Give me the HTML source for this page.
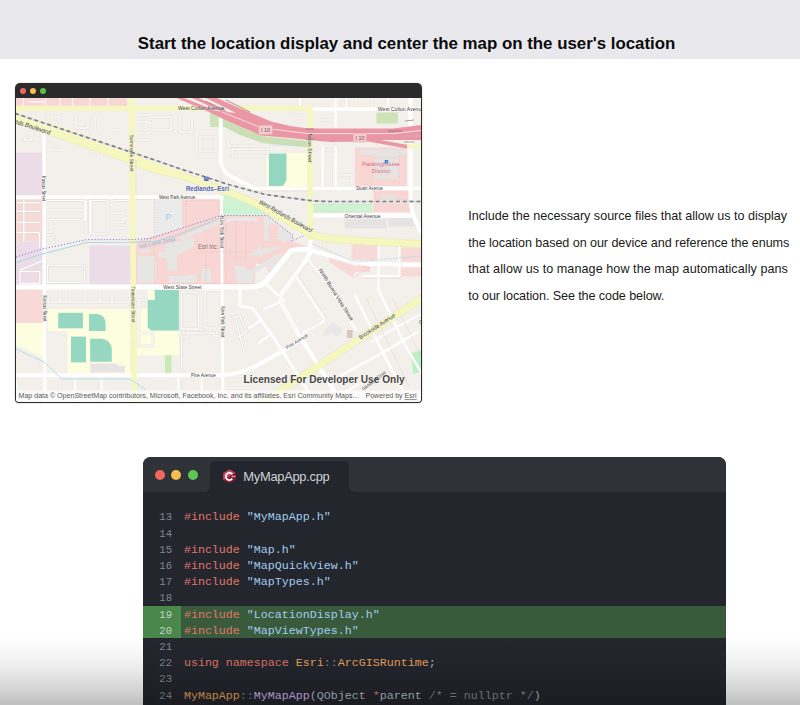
<!DOCTYPE html>
<html lang="en">
<head>
<meta charset="utf-8">
<title>Start the location display</title>
<style>
*{box-sizing:border-box;margin:0;padding:0}
html,body{width:800px;height:705px;overflow:hidden;background:#fff}
body{position:relative;font-family:"Liberation Sans",sans-serif;color:#151515}
.band{position:absolute;left:0;top:0;width:800px;height:59px;background:#e9e9ed}
.title{position:absolute;left:6.6px;top:34.2px;width:800px;text-align:center;font-weight:bold;font-size:16.85px;line-height:20px;color:#0b0b0b;white-space:nowrap}
.title span{display:inline-block}
.desc{position:absolute;left:468.3px;top:202.8px;font-size:12.6px;line-height:26.7px;color:#1a1a1a;white-space:nowrap}
.desc span{display:block}
/* map window */
.mapwin{position:absolute;left:15px;top:83px;width:407px;height:320px;background:#2b2b2b;border-radius:5px 5px 4px 4px;overflow:hidden;box-shadow:0 0 2px rgba(0,0,0,.25)}
.mapwin .dot{position:absolute;top:5px;width:6px;height:6px;border-radius:50%}
.mapwin svg{position:absolute;left:1px;top:15px;width:405px;height:304px;border-radius:0 0 3px 3px}
/* code window */
.code{position:absolute;left:143px;top:456.8px;width:582.5px;height:260px;background:#23262d;border-radius:8px 8px 0 0;overflow:hidden}
.code .bar{position:absolute;left:0;top:0;width:100%;height:35px;background:#2f3338}
.code .tab{position:absolute;left:67px;top:4px;width:139px;height:31px;background:#23262d;border-radius:5px 5px 0 0}
.code .cn{position:absolute;top:29px;width:6px;height:6px;background:#23262d}
.code .cn i{display:block;width:6px;height:6px;background:#2f3338}
.code .tl{position:absolute;top:13px;width:10px;height:10px;border-radius:50%}
.code .fname{position:absolute;left:100.3px;top:12.2px;font-size:12.9px;letter-spacing:-.28px;line-height:15px;color:#cfd2d6;white-space:nowrap}
.code .hl{position:absolute;left:0;top:149.3px;width:100%;height:32.4px;background:#3a5a3c}
.code .hlg{position:absolute;left:0;top:149.3px;width:37.5px;height:32.4px;background:#4a874b}
.code pre{position:absolute;left:0;top:52.6px;font-family:"Liberation Mono",monospace;font-size:11.67px;line-height:16.2px;color:#adbac7;white-space:pre}
.code pre .n{display:inline-block;width:29px;text-align:right;margin-right:11.9px;color:#7f8792;font-size:10.6px}
.k{color:#e07768}.s{color:#a2cdef}.c{color:#e9a35c}.f{color:#d3b8f5}.g{color:#7f8994}.p{color:#b4bfcb}
.fade{position:absolute;left:0;top:636px;width:800px;height:69px;background:linear-gradient(to bottom,rgba(0,0,0,0) 0%,rgba(0,0,0,.02) 17%,rgba(0,0,0,.048) 33%,rgba(0,0,0,.088) 50%,rgba(0,0,0,.135) 66%,rgba(0,0,0,.188) 83%,rgba(0,0,0,.25) 100%)}
</style>
</head>
<body>
<div class="band"></div>
<div class="title"><span>Start the location display and center the map on the user's location</span></div>

<div class="mapwin">
  <i class="dot" style="left:5px;background:#ee6a5e"></i>
  <i class="dot" style="left:15px;background:#f5bd4f"></i>
  <i class="dot" style="left:25px;background:#58c242"></i>
  <svg viewBox="16 98 405 304" font-family="Liberation Sans, sans-serif">
    <rect x="16" y="98" width="405" height="304" fill="#f3efea"/>
    <!--MAP-->
<defs>
  <clipPath id="mc"><rect x="16" y="98" width="405" height="304"/></clipPath>
</defs>
<g clip-path="url(#mc)">
<!-- land-use areas -->
<g>
  <!-- pink strip top-left (north of Colton) -->
  <rect x="16" y="98" width="111" height="8" fill="#f7d6d4"/>
  <path d="M23.5 98V106M45.5 98V106M60 98V106M72.5 98V106M90 98V106M108 98V106M28 102H44" stroke="#fcf5f3" stroke-width="1.3" fill="none"/>
  <!-- lavender left -->
  <rect x="16" y="152.5" width="26.5" height="43" fill="#ecdde8"/>
  <!-- pink left block below West Park -->
  <rect x="16" y="199.5" width="26.5" height="42" fill="#f7d9d7"/>
  <!-- lavender left bottom -->
  <path d="M16 241.5H42.5V285H16Z" fill="#ecdde8"/>
  <rect x="89.5" y="245.5" width="41" height="39.5" fill="#ecdde8"/>
  <!-- pink left below State -->
  <rect x="16" y="289.5" width="27" height="33.5" fill="#f7d9d7"/>
  <!-- light yellow left strip -->
  <path d="M16 323H43V358L16 345Z" fill="#fdfde0"/>
  <!-- school light yellow -->
  <path d="M47.5 309H131.5V373H67.5V331H47.5Z" fill="#fdfde0"/>
  <path d="M147 290.6H154.8V300H147.7V308.4H137V355.2H178.9V330.4H151V308Z" fill="#fdfde0"/>
  <!-- teal pitches -->
  <rect x="58.2" y="312.8" width="24.7" height="15.5" fill="#95d7c0"/>
  <path d="M89 314H97Q105.6 315 105.6 324V331H89Z" fill="#95d7c0"/>
  <rect x="71" y="336.6" width="15" height="25.8" fill="#95d7c0"/>
  <path d="M90.2 338.8H102Q111.8 340.5 111.8 350V361.8H90.2Z" fill="#95d7c0"/>
  <path d="M154.8 290H178.9V330.4H151.2L147.7 327.5V299.9H154.8Z" fill="#95d7c0"/>
  <rect x="165.1" y="355.2" width="6.4" height="17.7" fill="#c9ebb5"/>
  <!-- teal + yellow near Texas St -->
  <rect x="266.5" y="153" width="41" height="33.5" fill="#fdfde0"/>
  <path d="M269 153.6H286.5V180L283 186H269Z" fill="#95d7c0"/>
  <!-- Esri campus pink -->
  <path d="M135.7 241.8L181.8 227.2V199.2H220V215.5H267.5L293 235.4L291.6 241L308 247L291.6 248.2L271.7 275.1L264.6 284.3H135.7Z" fill="#f7d6d4"/>
  <path d="M256.1 263.75L264 264.5L270.3 273.7L266 280.8L254.7 284.3Z" fill="#f3efea"/>
  <!-- parking gray -->
  <path d="M154.8 199.2H181.8V227.2L154.8 235.4Z" fill="#ebebeb"/>
  <!-- Esri buildings -->
  <g fill="#e7e6e5">
  <path d="M137.8 256H155.5V282.2H137.8Z"/>
  <path d="M138.5 249.5H151V252H138.5Z"/>
  <path d="M164.75 244.6L194.5 237.5V246.7L176.8 255.25V270.85H167.6V263.75L164.75 258Z"/>
  <path d="M158.5 251.5H164.75V258H158.5Z"/>
  <path d="M179 237.5L218 220.5L220.8 223.3L181.8 240.35Z"/>
  <path d="M169 276H188V274.5H196.7V282.2H169Z"/>
  <path d="M200.9 268.7H210.85V282.2H200.9Z"/>
  <path d="M264 216.2H267.5L292.3 235.4L291.6 241L283 242.5L278.8 239H269V241H264Z"/>
  <path d="M225.6 217.7H256L258 220.5L256 223L253 220.5H232L225.6 224Z" fill="#eceae9"/>
  <path d="M250.5 251L258 250V244H260V249.6L278.8 246L279.5 248.2L262 256L251 255Z"/>
  <path d="M245.5 273.7L280.2 252.4L282.4 254.5L248.3 277.2Z"/>
  <path d="M233.4 265.2L245.5 267.3L253.3 275.1L254 282.9H236.3L236 272Z"/>
  <path d="M264 263.75L280.2 253.8L283 256.7L270.3 272.3Z"/>
  </g>
  <path d="M268.2 224.75H278.1V238.2H268.2Z" fill="#f7d6d4"/>
  <!-- park green -->
  <path d="M222.8 194.25L256.1 204.2L267.5 214.8H222.8Z" fill="#cdf3d3"/>
  <!-- Packinghouse -->
  <path d="M355 147.5H406.6V186H355Z" fill="#f7d6d4"/>
  <path d="M374 190.5H410V212H374Z" fill="#f7d6d4"/>
  <path d="M360 149.5H406V155.5H399V179H375V155.5H360Z" fill="#e6e4e3"/>
  <!-- green strip Oriental -->
  <rect x="313" y="203.8" width="59.5" height="8.5" fill="#cdf3d3"/>
  <!-- gray buildings oriental -->
  <rect x="344.5" y="218.8" width="42" height="9.5" fill="#e6e4e3"/>
  <rect x="388.5" y="218" width="27" height="8.5" fill="#e6e4e3"/>
  <rect x="382" y="195" width="14" height="7" fill="#e6e4e3"/>
  <!-- pinks south of blvd -->
  <rect x="352.5" y="244" width="25" height="16" fill="#f7d9d7"/>
  <rect x="401.5" y="247.5" width="20" height="14" fill="#f7d9d7"/>
  <rect x="401.5" y="267.5" width="20" height="9" fill="#f7d9d7"/>
  <path d="M329 258L370 267V272L355 272L352 277L329 262Z" fill="#f7d9d7"/>
  <!-- green top right -->
  <rect x="376.4" y="112.5" width="21.5" height="11" fill="#cfe3ba"/>
  <!-- freeway green verge -->
  <path d="M210 113H219V127H210Z" fill="#cfe3ba"/>
  <path d="M222 119L262 136L308 141V147.5L262 143L240 135L222 126Z" fill="#cbdfb7"/>
  <!-- small greens bottom right -->
  <path d="M411 353L421 350V372L413 374Z" fill="#bdf0c6"/>
  <!-- gray building school -->
  <path d="M90.2 363.5H116L118 366H125V372.4H90.2Z" fill="#e6e4e3"/>
  <path d="M323 332L333 322L343 329L338 337L331 333L325 337Z" fill="#e9e8e8"/>
  <rect x="347" y="330" width="5.5" height="8" fill="#d9c5bf"/>
</g>
<!-- thin service roads -->
<g fill="none" stroke="#d3cec8" stroke-width="2.4" opacity=".8">
  <path d="M24 132V140H32V132M48 112V118M52 117H60V126M76 117V128H88V117M95 117V131M112 130H120M98 158V152H90M60 150H50"/>
  <path d="M47 200.5H83Q84.5 200.5 84.5 202V219.8H47M47 210H84.5M86 200V234M89.4 200V234M91 200.5H106.5Q107.9 200.5 107.9 202V232.5Q107.9 234 106.5 234H92.4Q91 234 91 232.5ZM113 200.5H128M113 213H124V222H113M113 228H126M47 222H51V232H47M46.5 235H53Q54.5 235 54.5 237V241Q54.5 242.5 53 242.5H46.5M47.5 265.2H82.5Q84.5 265.2 84.5 267V280.5Q84.5 282.2 82.5 282.2H47.5Z"/>
  <path d="M17 202.8H40M17 211.3H40M17 222.6H40M17 232.5H40M23.8 200V241M39.5 232.5V248M19.9 271.5H39.8V283.6H19.9ZM20 270L42 261"/>
  <path d="M48 292V302H128M60 292V302M70 292V302M85 292V302M100 292V302M112 292V302"/>
  <path d="M153 117H171V130H153M180 116V132H192V120M200 137H216V151H200ZM197 132V158M228 140V146H254M232 149H268V156H232Z"/>
  <path d="M140 115H150M140 122H150V133H140M140 140H150"/>
  <path d="M290 112H300M318 120H333M352 100V108M372 100V106M322 150H334M322 160H334V185M338 175H352V185"/>
  <path d="M137 300H146M139 300V346H153V333H139M181.5 292H197Q198.8 292 198.8 294V329H181.5ZM205 290.5H221V328H205ZM181.5 333H188V337H181.5V372M188 333H214V336H221M230 318L240 316L247 332L237 338M236 320L244 352"/>
  <path d="M48 380V398M60 380V398M100 380V398M120 380V398M160 380V398M180 380V398M200 380V398M140 380V398"/>
  <path d="M228 380H245M228 388H250"/>
</g>
<g fill="none" stroke="#fefdfc" stroke-width="1.5">
  <path d="M24 132V140H32V132M48 112V118M52 117H60V126M76 117V128H88V117M95 117V131M112 130H120M98 158V152H90M60 150H50"/>
  <path d="M47 200.5H83Q84.5 200.5 84.5 202V219.8H47M47 210H84.5M86 200V234M89.4 200V234M91 200.5H106.5Q107.9 200.5 107.9 202V232.5Q107.9 234 106.5 234H92.4Q91 234 91 232.5ZM113 200.5H128M113 213H124V222H113M113 228H126M47 222H51V232H47M46.5 235H53Q54.5 235 54.5 237V241Q54.5 242.5 53 242.5H46.5M47.5 265.2H82.5Q84.5 265.2 84.5 267V280.5Q84.5 282.2 82.5 282.2H47.5Z"/>
  <path d="M17 202.8H40M17 211.3H40M17 222.6H40M17 232.5H40M23.8 200V241M39.5 232.5V248M19.9 271.5H39.8V283.6H19.9ZM20 270L42 261"/>
  <path d="M48 292V302H128M60 292V302M70 292V302M85 292V302M100 292V302M112 292V302"/>
  <path d="M153 117H171V130H153M180 116V132H192V120M200 137H216V151H200ZM197 132V158M228 140V146H254M232 149H268V156H232Z"/>
  <path d="M140 115H150M140 122H150V133H140M140 140H150"/>
  <path d="M290 112H300M318 120H333M352 100V108M372 100V106M322 150H334M322 160H334V185M338 175H352V185"/>
  <path d="M137 300H146M139 300V346H153V333H139M181.5 292H197Q198.8 292 198.8 294V329H181.5ZM205 290.5H221V328H205ZM181.5 333H188V337H181.5V372M188 333H214V336H221M230 318L240 316L247 332L237 338M236 320L244 352"/>
  <path d="M48 380V398M60 380V398M100 380V398M120 380V398M160 380V398M180 380V398M200 380V398M140 380V398"/>
  <path d="M228 380H245M228 388H250"/>
</g>
<!-- white roads -->
<g fill="none" stroke="#ffffff" stroke-linecap="round" stroke-linejoin="round">
  <path d="M16 197H222" stroke-width="3.6"/>
  <path d="M44 132L44.2 285L45 402" stroke-width="3.2"/>
  <path d="M16 287H252Q262 286 266 281.5L290 251.5Q293 249 310 249" stroke-width="5"/>
  <path d="M221.4 197L223 402" stroke-width="2.8"/>
  <path d="M16 375.2H222Q240 374 255 366.5L288 348L304 337" stroke-width="3.8"/>
  <path d="M251 188.3H421" stroke-width="3.2"/>
  <path d="M220.7 117V160Q221 172 232 177L252 187" stroke-width="3.8"/>
  <path d="M313 215.6H411" stroke-width="4"/>
  <path d="M410.5 98V198Q411 215 421 232" stroke-width="4.2"/>
  <path d="M313 109.2H421" stroke-width="3.6"/>
  <path d="M310.5 238V250L327 255L355 263.5L421 265" stroke-width="4"/>
  <path d="M310.5 252L304.5 262.5L281 295Q279.5 299 281.5 303L297 332L320 368L341 402" stroke-width="4"/>
  <path d="M265.5 283.5L280 297" stroke-width="2.6"/>
  <path d="M309 261L324 277.5L345 312L356 330" stroke-width="2.2"/>
  <path d="M296.3 276.8L324 318Q324.5 320.5 322 322L303 333" stroke-width="2.2"/>
  <path d="M240 286V306L252.8 308.3L274.5 339L292 366L315 402" stroke-width="2.8"/>
  <path d="M249 327.8L261 320.3M259 343L270 335M285 300L264 309" stroke-width="2"/>
  <path d="M335.7 98V127M335.7 148V186M322.6 146V186M300 98V106M346 98V108M388 98V108" stroke-width="2"/>
  <path d="M378.5 246V290L392 318L404 343L421 372" stroke-width="2.4"/>
  <path d="M399.5 247V276H364" stroke-width="2.2"/>
  <path d="M355 295L383 352.7L404 393" stroke-width="2.4"/>
  <path d="M337.5 377.3L377.8 355.4L418 331.8" stroke-width="2.4"/>
  <path d="M355 340L372 329M372 342L395 328L421 314M384 356L400 385M345 392L372 377" stroke-width="1.8"/>
  <path d="M16 380V402M75 377V402M102 377V402M178 377V402M202 377V402" stroke-width="1.6"/>
</g>
<!-- yellow roads -->
<g fill="none" stroke="#f6f7bf" stroke-linejoin="round">
  <path d="M16 108.3H313" stroke-width="5"/>
  <path d="M131.6 98L134.4 402" stroke-width="5.4"/>
  <path d="M310.3 108V240" stroke-width="5.6"/>
  <path d="M14 117.8L80 140L130 157.5L180 175L230 192.5L257.5 204.6L290 222.5L310 233.5Q318 237 327.5 238.3L365 241.3L422 244" stroke-width="7.2"/>
  <path d="M425 296.2L250 410.6" stroke-width="6.2"/>
  <path d="M407.5 146.5H422" stroke-width="4"/>
  <path d="M14 111.8L55 123.8L95 138.3L127 150.3L150 161.3L180 171.4V178.6L150 172L127 162.4L95 151L55 136.5L14 122.2Z" fill="#f6f7bf" stroke="none"/>
  <path d="M14 108.3Q14 113 22 116" stroke-width="5"/>
</g>
<g fill="none" stroke="#e3e4a2" stroke-width=".5" opacity=".8">
  <path d="M180 171.4L230 188.9L259 201.5L291.5 219.3L311 230.2Q318 233.5 327.5 234.7L365 237.7L422 240.4"/>
  <path d="M14 122.4L55 136.7L95 151.2L127 162.6L150 172.2L180 178.8L230 196.1L256 207.9L288.5 225.7L309 236.8Q318 240.5 327.5 241.9L365 244.9L422 247.6"/>
  <path d="M423 293L248 407.4M427 299.4L252 413.8"/>
</g>
<!-- freeway -->
<g>
  <path d="M176.5 98L210 112.5L225 120L261 135.5L285 137.5L308.7 140L331 142L368 141.5L407 148.4V144.7L380 140H421V125L393 128.5H308.7L290 126L271 121.5L246 111L217 98Z" fill="#ea97a6"/>
  <path d="M184 98L192 98L222 112L214 110Z M199 98L206 98L236 113L228 112Z" fill="#f6eeea"/>
  <path d="M222 112L262 128L308 133.6H393L421 130.5" fill="none" stroke="#fbe9ea" stroke-width=".9"/>
  <path d="M205 101L225 110M226 100L250 112M388 131H402M405 121L414 120M404 142L414 142M306 129H314M306 139H314" stroke="#8d5d63" stroke-width=".9" fill="none" opacity=".7"/>
</g>
<!-- railway -->
<path id="rail" d="M15 113.4L155 160.1L180 168.75L230 185L265 194.4L307.5 200.25Q320 201.5 330 201.5H421" fill="none" stroke="#fdfdfd" stroke-width="3"/>
<path d="M15 113.4L155 160.1L180 168.75L230 185L265 194.4L307.5 200.25Q320 201.5 330 201.5H421" fill="none" stroke="#e2e2e2" stroke-width="2.3"/>
<path d="M15 113.4L155 160.1L180 168.75L230 185L265 194.4L307.5 200.25Q320 201.5 330 201.5H421" fill="none" stroke="#7e7e7e" stroke-width="1.7" stroke-dasharray="3.8 3"/>
<!-- creek + dotted -->
<g fill="none">
  <path d="M16 262.5L42 254L87 242.5L130 242.3L155 241.5L175 236L218 219" stroke="#a9d7e6" stroke-width="1.1"/>
  <path d="M16 349L44 362L56 373L62 379H130L146 390" stroke="#b9dce8" stroke-width="1"/>
  <path d="M313 244L355 262L421 256" stroke="#a9d7e6" stroke-width="1" stroke-dasharray="1.5 1.5"/>
  <path d="M16 257L42 249L87 239.6L130 239.6L150 238.5L218 216.5L223 215.5H267.5L293 235.4L291.6 241L303.6 236.1" stroke="#7677e0" stroke-width="1" stroke-dasharray="1.1 2"/>
  <path d="M270 145H300M403 136H421" stroke="#a9d7e6" stroke-width=".8" stroke-dasharray="1.2 1.4"/>
</g>
<!-- red dashed footpaths -->
<g fill="none" stroke="#e88f8f" stroke-width=".6" stroke-dasharray="1 1.5" opacity=".6">
  <path d="M136 160V197M136 199.5H154M154.5 199.5V283.5H254M186 201H218V214M186 201V236M226 216V282M236 222V262M246 222V262M196 252H256M206 230V283"/>
  <path d="M221 165V214M252 191H310M313 204H372M313 212H372M374 191V212M374 200H410"/>
  <path d="M375 158H399M375 168H390M399 156V179"/>
  <path d="M309 262L279 297L296 331M312 262L326 279L347 314M298 275L326 317L304 333M330 258L370 268L352 278"/>
  <path d="M352 246V262M378 246V262M401 246V278H364M392 298L421 356M366 298L409 386M345 98V106"/>
  <path d="M131 290V372M118 362L126 368"/>
</g>

<!-- labels -->
<g font-size="5.6" fill="#3c3c3c" stroke="#ffffff" stroke-width="1.2" paint-order="stroke" stroke-opacity=".3" stroke-linejoin="round">
  <text x="178" y="110.4" textLength="46.4" lengthAdjust="spacingAndGlyphs">West Colton Avenue</text>
  <text x="377.8" y="111.3" textLength="46.4" lengthAdjust="spacingAndGlyphs">West Colton Avenue</text>
  <text x="159" y="199" textLength="36.2" lengthAdjust="spacingAndGlyphs" font-size="5.2">West Park Avenue</text>
  <text x="163.3" y="289" textLength="38.4" lengthAdjust="spacingAndGlyphs" font-size="6.2">West State Street</text>
  <text x="356" y="190.2" textLength="27" lengthAdjust="spacingAndGlyphs" font-size="5.4">Stuart Avenue</text>
  <text x="344.5" y="217.8" textLength="36" lengthAdjust="spacingAndGlyphs" font-size="6.2">Oriental Avenue</text>
  <text x="191" y="377.2" textLength="24.6" lengthAdjust="spacingAndGlyphs" font-size="5">Pine Avenue</text>
  <text transform="translate(129.6 134.5) rotate(89.5)" textLength="37" lengthAdjust="spacingAndGlyphs" font-size="5.4">Tennessee Street</text>
  <text transform="translate(131.3 286.5) rotate(89.5)" textLength="36" lengthAdjust="spacingAndGlyphs" font-size="5.4">Tennessee Street</text>
  <text transform="translate(42.2 176) rotate(90)" textLength="25" lengthAdjust="spacingAndGlyphs" font-size="5">Kansas Street</text>
  <text transform="translate(43 295.5) rotate(90)" textLength="26" lengthAdjust="spacingAndGlyphs" font-size="5">Kansas Street</text>
  <text transform="translate(308.4 132.5) rotate(90)" textLength="30" lengthAdjust="spacingAndGlyphs" font-size="5.6">Texas Street</text>
  <text transform="translate(219.6 216.3) rotate(90)" textLength="32" lengthAdjust="spacingAndGlyphs" font-size="5.4">New York Street</text>
  <text transform="translate(221.2 306.5) rotate(90)" textLength="31" lengthAdjust="spacingAndGlyphs" font-size="5.4">New York Street</text>
  <text transform="translate(318.6 270.2) rotate(58)" textLength="60" lengthAdjust="spacingAndGlyphs" font-size="5.4">North Buena Vista Street</text>
  <text transform="translate(258.6 203.2) rotate(29.5)" textLength="60" lengthAdjust="spacingAndGlyphs" font-size="6.4" font-style="italic">West Redlands Boulevard</text>
  <text transform="translate(11 122.2) rotate(18)" textLength="40.5" lengthAdjust="spacingAndGlyphs" font-size="6.5" font-style="italic">ands Boulevard</text>
  <text transform="translate(360.5 339.5) rotate(-33.2)" textLength="42" lengthAdjust="spacingAndGlyphs" font-size="5.8">Brookside Avenue</text>
  <text transform="translate(287 349.5) rotate(-32)" textLength="25" lengthAdjust="spacingAndGlyphs" font-size="5">Pine Avenue</text>
  <text transform="translate(363.5 391) rotate(-38)" textLength="29" lengthAdjust="spacingAndGlyphs" font-size="5">Glenwood Drive</text>
  <text transform="translate(418.5 321) rotate(62)" textLength="14" lengthAdjust="spacingAndGlyphs" font-size="5">Grant</text>
</g>
<!-- station -->
<rect x="204.2" y="176.6" width="4.4" height="4.4" fill="#5868b8"/>
<path d="M205.2 177.6H207.6M205.2 179H207.6" stroke="#c8cdee" stroke-width=".6"/>
<text x="185.9" y="191.2" font-size="7.4" font-weight="bold" fill="#4f62b5" stroke="#fff" stroke-width="1.2" paint-order="stroke" stroke-opacity=".6" textLength="43" lengthAdjust="spacingAndGlyphs">Redlands–Esri</text>
<text x="198" y="249.4" font-size="7" fill="#8a6d6d" textLength="20.2" lengthAdjust="spacingAndGlyphs">Esri Inc.</text>
<text x="165.6" y="219.8" font-size="9" fill="#9ccbe6">P</text>
<g font-size="6.1" fill="#e0647f" text-anchor="middle">
  <text x="380.8" y="166.2" textLength="37.8" lengthAdjust="spacingAndGlyphs">Packinghouse</text>
  <text x="381" y="173.3" textLength="18.4" lengthAdjust="spacingAndGlyphs">District</text>
</g>
<rect x="384.6" y="160" width="3.6" height="3.6" rx=".6" fill="#4f8bd6"/>
<text transform="translate(139.6 248.6) rotate(-12.4)" font-size="5.4" fill="#7db7d8" textLength="36.4" lengthAdjust="spacingAndGlyphs">Mill Creek Zanja</text>
<!-- shields -->
<g font-size="5.4" fill="#7b4c52" text-anchor="middle">
  <rect x="258.6" y="125.2" width="14" height="9.4" rx=".8" fill="#f5cdd0" stroke="#e1a0a8" stroke-width=".5"/>
  <text x="265.6" y="132">I 10</text>
  <rect x="353.2" y="133.6" width="13.4" height="8.4" rx=".8" fill="#f5cdd0" stroke="#e1a0a8" stroke-width=".5"/>
  <text x="359.9" y="139.8">I 10</text>
</g>
<text x="243.6" y="382.6" font-size="10.1" font-weight="bold" fill="#484848" stroke="#fff" stroke-width="1" stroke-opacity=".35" paint-order="stroke" textLength="161" lengthAdjust="spacingAndGlyphs">Licensed For Developer Use Only</text>
<!-- attribution -->
<rect x="16" y="390.4" width="405" height="12" fill="#ffffff" opacity=".68"/>
<text x="18.5" y="398.4" font-size="6.5" fill="#5a5a5a" textLength="341" lengthAdjust="spacingAndGlyphs">Map data © OpenStreetMap contributors, Microsoft, Facebook, Inc. and its affiliates, Esri Community Maps…</text>
<text x="365.5" y="398.4" font-size="6.5" fill="#5a5a5a" textLength="51.2" lengthAdjust="spacingAndGlyphs">Powered by <tspan text-decoration="underline">Esri</tspan></text>

</g>

<!--/MAP-->
  </svg>
</div>

<div class="desc">
<span style="letter-spacing:-.02px">Include the necessary source files that allow us to display</span>
<span style="letter-spacing:-.07px">the location based on our device and reference the enums</span>
<span style="letter-spacing:.06px">that allow us to manage how the map automatically pans</span>
<span style="letter-spacing:-.1px">to our location. See the code below.</span>
</div>

<div class="code">
  <div class="bar"></div>
  <div class="tab"></div>
  <div class="cn" style="left:61px"><i style="border-radius:0 0 6px 0"></i></div>
  <div class="cn" style="left:206px"><i style="border-radius:0 0 0 6px"></i></div>
  <i class="tl" style="left:12px;background:#ee6a5e"></i>
  <i class="tl" style="left:28.4px;background:#f5bd4f"></i>
  <i class="tl" style="left:44.8px;background:#5fc453"></i>
  <svg style="position:absolute;left:79.45px;top:11.85px" width="14.9" height="14.9" viewBox="0 0 26 26">
    <path d="M13 1 L23.7 7 V19 L13 25 L2.3 19 V7 Z" fill="#9d1e37"/>
    <path d="M13 1 L23.7 7 L2.3 19 V7 Z" fill="#c4485b"/>
    <path d="M23.7 7 V19 L13 25 L13 13 Z" fill="#7f1631"/>
    <path d="M17.9 9.2 A6.3 6.3 0 1 0 17.9 16.8" fill="none" stroke="#fff" stroke-width="3"/>
    <path d="M16.6 13h3.2M18.2 11.4v3.2M20.3 13h3M21.8 11.5v3" stroke="#fff" stroke-width="1"/>
  </svg>
  <div class="fname">MyMapApp.cpp</div>
  <div class="hl"></div><div class="hlg"></div>
<pre><span class="n">13</span><span class="k">#include</span> <span class="s">"MyMapApp.h"</span>
<span class="n">14</span>
<span class="n">15</span><span class="k">#include</span> <span class="s">"Map.h"</span>
<span class="n">16</span><span class="k">#include</span> <span class="s">"MapQuickView.h"</span>
<span class="n">17</span><span class="k">#include</span> <span class="s">"MapTypes.h"</span>
<span class="n">18</span>
<span class="n" style="color:#c3d3c3">19</span><span class="k">#include</span> <span class="s">"LocationDisplay.h"</span>
<span class="n" style="color:#c3d3c3">20</span><span class="k">#include</span> <span class="s">"MapViewTypes.h"</span>
<span class="n">21</span>
<span class="n">22</span><span class="k">using namespace</span> <span class="c">Esri</span><span class="g">::</span><span class="c">ArcGISRuntime</span><span class="p">;</span>
<span class="n">23</span>
<span class="n">24</span><span class="c">MyMapApp</span><span class="g">::</span><span class="f">MyMapApp</span><span class="p">(QObject </span><span class="k">*</span><span class="p">parent </span><span class="g">/* = nullptr */</span><span class="p">)</span>
</pre>
</div>

<div class="fade"></div>
</body>
</html>
